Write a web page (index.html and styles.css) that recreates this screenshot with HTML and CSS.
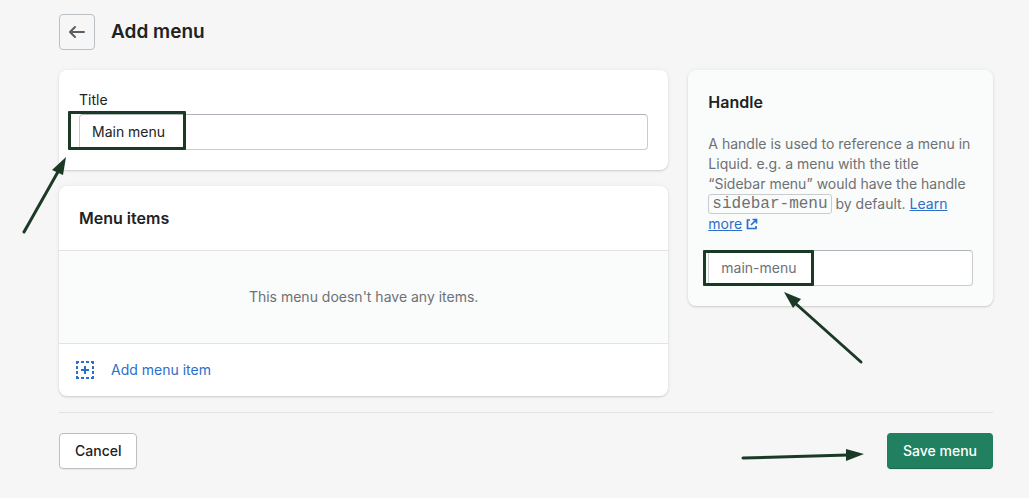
FILE: index.html
```html
<!DOCTYPE html>
<html lang="en">
<head>
    <meta charset="UTF-8">
    <meta name="viewport" content="width=device-width, initial-scale=1.0">
    <title>Add menu</title>
    <link rel="stylesheet" href="styles.css">
</head>
<body>

<main class="page">
    <header class="page-header">
        <button class="back" type="button" aria-label="Back">
            <svg width="20" height="20" viewBox="0 0 20 20" fill="none" stroke="#5c5f62" stroke-width="2" stroke-linecap="round" stroke-linejoin="round">
                <path d="M17 10H3.5M8 5l-5 5 5 5"/>
            </svg>
        </button>
        <h1>Add menu</h1>
    </header>

    <form>
        <div class="layout">
            <div class="column">
                <section class="card padded">
                    <label for="title">Title</label>
                    <div class="field">
                        <input type="text" id="title" value="Main menu">
                        <span class="highlight highlight-title"></span>
                        <svg class="arrow arrow-title" width="48" height="80" viewBox="0 0 48 80">
                            <path class="line" d="M4 77L39 15"/>
                            <path class="head" d="M46 2L32 15L43 20Z"/>
                        </svg>
                    </div>
                </section>

                <section class="card">
                    <h2 class="card-header">Menu items</h2>
                    <p class="empty">This menu doesn't have any items.</p>
                    <button class="add-item" type="button">
                        <svg width="20" height="20" viewBox="0 0 20 20" fill="#2c6ecb">
                            <path d="M1 1h3v2H3v1H1zM6 1h3v2H6zM11 1h3v2h-3zM16 1h3v3h-2V3h-1zM1 6h2v3H1zM1 11h2v3H1zM17 6h2v3h-2zM17 11h2v3h-2zM1 16h2v1h1v2H1zM6 17h3v2H6zM11 17h3v2h-3zM17 16h2v3h-3v-2h1z"/>
                            <path d="M9 6h2v3h3v2h-3v3H9v-3H6V9h3z"/>
                        </svg>
                        Add menu item
                    </button>
                </section>
            </div>

            <section class="card padded subdued">
                <h2>Handle</h2>
                <p class="help" id="handle-help">
                    A handle is used to reference a menu in Liquid. e.g. a menu with the title “Sidebar menu” would have the handle <code>sidebar-menu</code> by default.
                    <a href="#">Learn more</a>
                    <svg class="external" width="12" height="12" viewBox="0 0 12 12" fill="none" stroke="#2c6ecb" stroke-width="1.7">
                        <path d="M4 2H1.5v8.5H10V8M6.5 1.5h4v4M10.5 1.5L5 7"/>
                    </svg>
                </p>
                <div class="field">
                    <input type="text" id="handle" placeholder="main-menu" aria-label="Handle" aria-describedby="handle-help">
                    <span class="highlight highlight-handle"></span>
                    <svg class="arrow arrow-handle" width="82" height="74" viewBox="0 0 82 74">
                        <path class="line" d="M79 71L13 12"/>
                        <path class="head" d="M2 1L19 8L11 17Z"/>
                    </svg>
                </div>
            </section>
        </div>

        <footer class="actions">
            <button class="btn" type="button">Cancel</button>
            <div class="save">
                <svg class="arrow arrow-save" width="124" height="16" viewBox="0 0 124 16">
                    <path class="line" d="M2 11L107 8"/>
                    <path class="head" d="M123 7L105 2L105 14Z"/>
                </svg>
                <button class="btn primary" type="submit">Save menu</button>
            </div>
        </footer>
    </form>
</main>

</body>
</html>
```
FILE: styles.css
```css
* { box-sizing: border-box; }
body {
    margin: 0;
    background: #f6f6f6;
    color: #202223;
    font-family: Inter, "Liberation Sans", sans-serif;
    font-size: 14px;
    line-height: 20px;
}
h1, h2, p { margin: 0; }
h1 { font-size: 19px; line-height: 28px; font-weight: 600; }
h2 { font-size: 16px; line-height: 24px; font-weight: 600; }
button, input { font: inherit; color: inherit; }
button { cursor: pointer; }
a { color: #2c6ecb; }

.page { padding: 14px 36px 28px 59px; }
.page-header { display: flex; align-items: center; gap: 16px; margin-bottom: 20px; }
.back {
    display: flex;
    align-items: center;
    justify-content: center;
    width: 36px;
    height: 36px;
    padding: 0;
    background: none;
    border: 1px solid #babfc3;
    border-radius: 4px;
}

.layout { display: grid; grid-template-columns: 2fr 1fr; gap: 20px; align-items: start; }
.column { display: grid; gap: 16px; }
.card {
    background: #fff;
    border-radius: 8px;
    box-shadow: 0 0 5px rgba(23, 24, 24, 0.05), 0 1px 2px rgba(0, 0, 0, 0.15);
}
.padded { padding: 20px; }
.subdued { background: #fafbfb; }
.card-header { padding: 20px; }

label { display: block; margin-bottom: 4px; }
.field { position: relative; }
.field input {
    display: block;
    width: 100%;
    height: 36px;
    padding: 0 12px 2px;
    background: #fff;
    border: 1px solid #c9cccf;
    border-top-color: #aeb4b9;
    border-radius: 4px;
}
.field input::placeholder { color: #6d7175; opacity: 1; }

.empty {
    padding: 36px 20px;
    background: #fafbfb;
    border-top: 1px solid #e1e3e5;
    border-bottom: 1px solid #e1e3e5;
    color: #6d7175;
    text-align: center;
}
.add-item {
    display: flex;
    align-items: center;
    gap: 16px;
    width: 100%;
    padding: 16px;
    background: none;
    border: 0;
    color: #2c6ecb;
}

.help { margin: 20px 0 16px; color: #6d7175; }
.help code {
    display: inline-block;
    padding: 0 3px;
    border: 1px solid #c9cccf;
    border-radius: 3px;
    font-family: "Liberation Mono", monospace;
    font-size: 16px;
    line-height: 18px;
    vertical-align: top;
}
.external { vertical-align: -1px; }

.actions {
    display: flex;
    justify-content: space-between;
    margin-top: 16px;
    padding-top: 20px;
    border-top: 1px solid #e1e3e5;
}
.btn {
    height: 36px;
    padding: 0 15px;
    background: #fff;
    border: 1px solid #babfc3;
    border-radius: 4px;
    box-shadow: 0 1px 0 rgba(0, 0, 0, 0.05);
    font-weight: 500;
}
.primary { background: #208060; border-color: #208060; border-bottom-color: #1a6a50; color: #fff; }
.save { position: relative; }

/* walkthrough marks */
.highlight { position: absolute; border: 3px solid #1b3a26; border-radius: 1px; pointer-events: none; }
.highlight-title { left: -11px; top: -3px; width: 118px; height: 39px; }
.highlight-handle { left: -5px; top: 0; width: 111px; height: 36px; }
.arrow { position: absolute; pointer-events: none; }
.arrow .line { fill: none; stroke: #1b3a26; stroke-width: 3; stroke-linecap: round; }
.arrow .head { fill: #1b3a26; }
.arrow-title { left: -59px; top: 41px; }
.arrow-handle { left: 74px; top: 41px; }
.arrow-save { right: 128px; top: 14px; }
```
